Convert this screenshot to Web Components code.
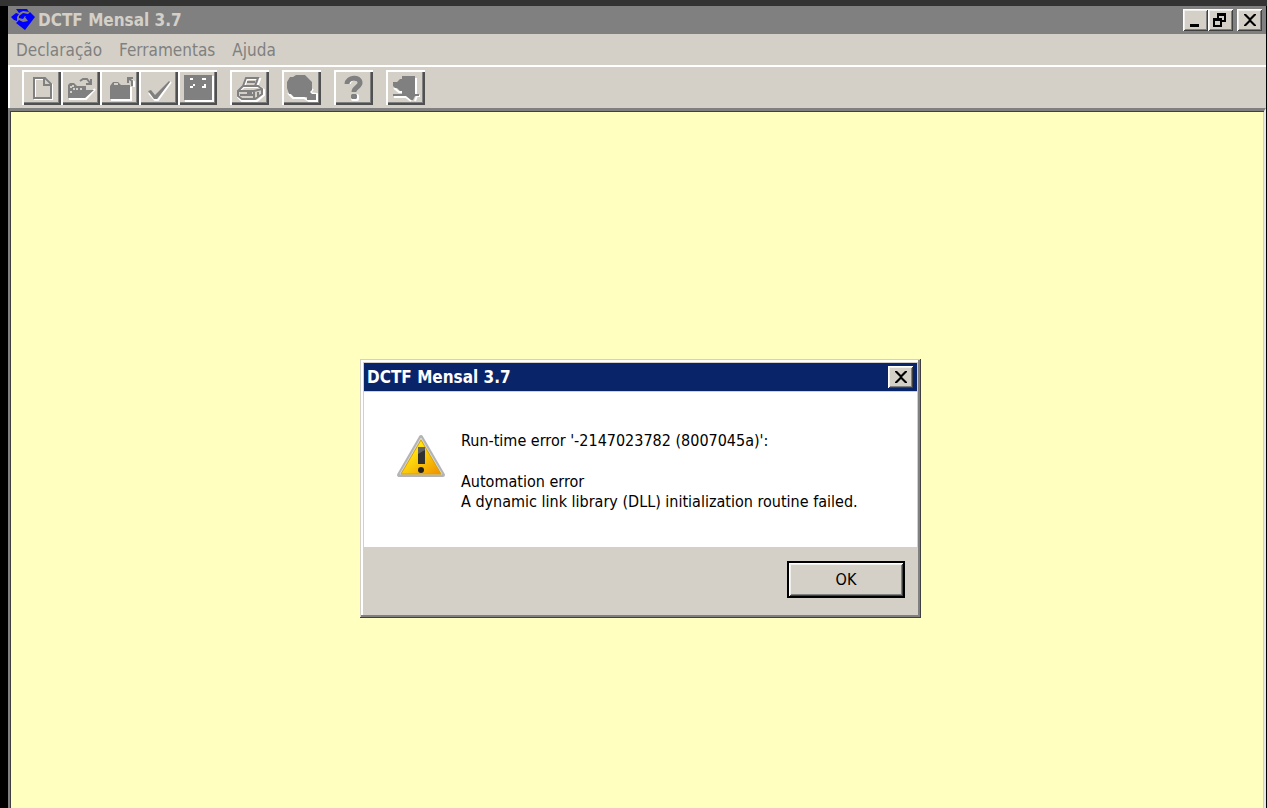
<!DOCTYPE html>
<html lang="pt-BR">
<head>
<meta charset="utf-8">
<title>DCTF Mensal 3.7</title>
<style>
   body {
      margin: 0;
      min-height: 100vh;
      display: flex;
      background: #000;
      font-family: "DejaVu Sans Condensed", "DejaVu Sans", "Noto Sans", sans-serif;
      font-stretch: condensed;
      font-size: 16px;
      line-height: 20px;
      --face: #d4d0c8;
      --shadow: #808080;
      --dark: #404040;
   }
   main {
      flex: 1;
      display: flex;
      flex-direction: column;
      border-top: 6px solid #333;
   }
   app-window { flex: 1; }
</style>
</head>
<body>
<main>
   <app-window>
      <title-bar slot="title" text="DCTF Mensal 3.7" logo controls="minimize restore close"></title-bar>
      <menu-bar slot="menu" items="Declaração,Ferramentas,Ajuda"></menu-bar>
      <tool-bar slot="tools"></tool-bar>
      <error-dialog heading="DCTF Mensal 3.7">
         <p>Run-time error '-2147023782 (8007045a)':</p>
         <p>Automation error<br>A dynamic link library (DLL) initialization routine failed.</p>
      </error-dialog>
   </app-window>
</main>

<script>
const ICONS = {
   novo: '<path d="M12 8h11l6 6v14H12z" fill="none" stroke="#fff" stroke-width="2" transform="translate(1 1)"/><path d="M12 8h11l6 6v14H12zM22 8v7h7" fill="none" stroke="#808080" stroke-width="2"/>',
   abrir: '<path d="M8 29h17l9-10" fill="none" stroke="#fff" stroke-width="2"/><path d="M7 28V15l2-2h4l3 3h9v4h8l-9 8z" fill="#808080"/><path d="M9 16h2v2H9zm3 2h2v2h-2zm-3 3h2v2H9zm6-3h2v2h-2zm4 0h2v2h-2zm-8-3h2v2h-2z" fill="#d4d0c8"/><path d="M19 11l3-2h4l3 4M25 14h5V9" fill="none" stroke="#808080" stroke-width="2"/>',
   fechar: '<path d="M11 30h20V17" fill="none" stroke="#fff" stroke-width="2"/><path d="M10 29V16l3-4h5l3 3h9v14z" fill="#808080"/><path d="M14 14h4" stroke="#d4d0c8" stroke-width="2"/><path d="M34 17v-5l-4-3" fill="none" stroke="#fff" stroke-width="2"/><path d="M32 16v-5l-4-3M28 13V8h5" fill="none" stroke="#808080" stroke-width="2"/>',
   verificar: '<path d="M10 23l6 7h3l13-18" fill="none" stroke="#fff" stroke-width="2"/><path d="M9 21l3-1 4 5 14-14 1 1-13 17h-3z" fill="#808080"/>',
   tabela: '<path d="M7 31h28V6" fill="none" stroke="#fff" stroke-width="2"/><path d="M6 5h28v25H6z" fill="#808080"/><path d="M12 8h3v2h-3zm12 0h4v2h-4zM12 16h3v2h-3zm3-2h2v2h-2zm9 2h4v2h-4zm2-2h2v2h-2z" fill="#fff"/>',
   imprimir: '<path d="M14 17l3-8h13l-3 8M8 22l6-5h16l4 3v5l-7 6H12l-4-4z" fill="none" stroke="#fff" stroke-width="2"/><g fill="none" stroke="#808080" stroke-width="2"><path d="M13 16l3-8h12l-3 8M17 12h8M8 21l5-5h15l4 3v5l-7 5H12l-4-3zM8 21h16l8-2M24 21v8M10 25h13M28 22v5"/></g><path d="M17 22h5v4h-5z" fill="#808080"/>',
   pesquisar: '<path d="M31 19l-3 4 7 1v7h-8l-5-3H11l-5-5" fill="none" stroke="#fff" stroke-width="2"/><path d="M14 5h9l7 7v8l-2 2 2 2h4v6h-9v-3H12l-3-3H7l-2-6v-6l3-5h3z" fill="#808080"/>',
   ajuda: '<path d="M15 14v-2l3-3h5l3 3v3l-5 4v3M19 26h4v3h-4z" fill="none" stroke="#fff" stroke-width="4" stroke-linejoin="round"/><path d="M13 14c0-7 13-8 13-1 0 4-6 4-6 9" fill="none" stroke="#808080" stroke-width="5"/><path d="M18 24h4l1 1v3l-1 1h-4l-1-1v-3z" fill="#808080"/>',
   sair: '<path d="M30 8v16M34 26h-3l-2 5M8 27h12l5 4M8 18l5 4h3" fill="none" stroke="#fff" stroke-width="2"/><path d="M16 6h13v18h4v2h-4l-2 4h-2l-5-4H7v-2h9v-3h-2l-3-3H9l-2-2v-4h4l3-3h2z" fill="#808080"/>'
};

const GLYPHS = {
   minimize: '<path d="M7 15h9v3H7z"/>',
   restore: '<path d="M9 4h9v3H9zM9 4h2v5H9zM16 4h2v9h-2zM13 11h5v2h-5zM5 9h9v3H5zM5 9h2v9H5zM12 9h2v9h-2zM5 16h9v2H5z"/>',
   close: '<path d="M7 5h2l4 4 4-4h2v1l-5 5 5 5v1h-2l-4-4-4 4H7v-1l5-5-5-5z"/>'
};

const LABELS = { minimize: 'Minimizar', restore: 'Restaurar', close: 'Fechar' };

// raised 3D edge used by every push button
const RAISED = `
   button {
      margin: 0;
      padding: 0;
      border: 0;
      font: inherit;
      background: var(--face);
      box-shadow: inset 1px 1px #fff, inset -1px -1px var(--dark), inset 2px 2px #f0eeea, inset -2px -2px var(--shadow);
   }
   svg { display: block; }
`;

class TitleBar extends HTMLElement {
   constructor() {
      super();
      this.attachShadow({ mode: 'open' });
   }

   connectedCallback() {
      const controls = (this.getAttribute('controls') || '').split(' ');
      this.shadowRoot.innerHTML = `
      <style>
      ${RAISED}
      :host {
         display: flex;
         align-items: center;
         height: 28px;
         padding: 0 4px 0 3px;
         background: var(--title-bg, #808080);
         color: var(--title-color, #d4d0c8);
         font-size: 17px;
         font-weight: bold;
      }
      .logo { margin-right: 3px; }
      span { flex: 1; }
      button { width: 25px; height: 22px; }
      .close { margin-left: 4px; }
      </style>
      ${this.hasAttribute('logo') ? `
      <svg class="logo" width="24" height="24" viewBox="0 0 24 24" fill="#00f">
         <path d="M5 1h11l2 3-6-1-4 2zM0 9l5-4 3 1-2 3v4l-3-1zM19 4l5 5-10 13-9-7 3-3 4 2 5-1-3-4z"/>
         <path d="M8 8l4-3 5 1 1 3-4-1-2 3-4-1z"/>
      </svg>` : ''}
      <span>${this.getAttribute('text')}</span>
      ${controls.map(c => `<button class="${c}" aria-label="${LABELS[c]}"><svg width="25" height="22">${GLYPHS[c]}</svg></button>`).join('')}
      `;
   }
}

class MenuBar extends HTMLElement {
   constructor() {
      super();
      this.attachShadow({ mode: 'open' });
   }

   connectedCallback() {
      this.shadowRoot.innerHTML = `
      <style>
      :host {
         display: flex;
         align-items: center;
         gap: 17px;
         height: 31px;
         padding-left: 8px;
         font-size: 17px;
      }
      button {
         padding: 0;
         border: 0;
         background: none;
         font: inherit;
         color: #808080;
      }
      </style>
      ${this.getAttribute('items').split(',').map(i => `<button>${i}</button>`).join('')}
      `;
   }
}

class ToolBar extends HTMLElement {
   constructor() {
      super();
      this.attachShadow({ mode: 'open' });
      const groups = [['novo', 'abrir', 'fechar', 'verificar', 'tabela'], ['imprimir'], ['pesquisar'], ['ajuda'], ['sair']];
      this.shadowRoot.innerHTML = `
      <style>
      ${RAISED}
      :host {
         display: flex;
         gap: 13px;
         padding: 3px 12px;
         border: solid #fff;
         border-width: 2px 0 0 2px;
      }
      div { display: flex; }
      button {
         width: 39px;
         height: 35px;
         box-shadow: inset 2px 2px #fff, inset -2px -2px #505050, inset -3px -3px var(--shadow);
      }
      </style>
      ${groups.map(g => `<div>${g.map(n => `<button aria-label="${n}"><svg width="39" height="35">${ICONS[n]}</svg></button>`).join('')}</div>`).join('')}
      `;
   }
}

class ErrorDialog extends HTMLElement {
   constructor() {
      super();
      this.attachShadow({ mode: 'open' });
   }

   connectedCallback() {
      this.shadowRoot.innerHTML = `
      <style>
      ${RAISED}
      :host {
         display: block;
         padding: 4px;
         background: var(--face);
         color: #000;
         box-shadow: inset -1px -1px var(--dark), inset 1px 1px var(--face), inset -3px -3px var(--shadow), inset 3px 3px #fff;
         --title-bg: #0a246a;
         --title-color: #fff;
      }
      .body {
         display: flex;
         gap: 15px;
         margin-top: 1px;
         padding: 39px 32px 35px;
         background: #fff;
      }
      .body svg { flex: none; margin-top: 3px; }
      ::slotted(p) { margin: 0 0 21px; }
      ::slotted(p:last-child) { margin: 0; }
      .actions {
         display: flex;
         justify-content: flex-end;
         padding: 14px 12px 16px;
      }
      .actions button {
         width: 118px;
         height: 37px;
         border: 2px solid #000;
      }
      </style>
      <title-bar text="${this.getAttribute('heading')}" controls="close"></title-bar>
      <div class="body">
         <svg width="50" height="46" viewBox="0 0 50 46">
            <defs>
               <linearGradient id="y" x1="0" y1="0" x2="1" y2="1">
                  <stop offset=".3" stop-color="#ffe610"/>
                  <stop offset="1" stop-color="#f09000"/>
               </linearGradient>
            </defs>
            <path d="M25 3L3 41h44z" fill="#b4b4b4" stroke="#b4b4b4" stroke-width="4" stroke-linejoin="round"/>
            <path d="M25 4L4 40h42z" fill="#d8d8d8" stroke="#d8d8d8" stroke-linejoin="round"/>
            <path d="M25 6L5 40h40z" fill="url(#y)" stroke="#d9a300"/>
            <path d="M22 13h7v17h-7z" fill="#303030"/>
            <path d="M22 20l7-4v-3h-7z" fill="#606060"/>
            <circle cx="25" cy="36" r="3" fill="#222"/>
         </svg>
         <div><slot></slot></div>
      </div>
      <div class="actions"><button>OK</button></div>
      `;
   }
}

class AppWindow extends HTMLElement {
   constructor() {
      super();
      this.attachShadow({ mode: 'open' });
      this.shadowRoot.innerHTML = `
      <style>
      :host {
         display: flex;
         flex-direction: column;
         margin: 0 1px 0 8px;
         background: var(--face);
      }
      .client {
         flex: 1;
         position: relative;
         border: solid var(--shadow);
         border-width: 3px 2px 0 2px;
         border-right-color: #e8e6e2;
         background: #ffffc0;
         box-shadow: inset 1px 1px var(--dark), inset -1px 0 var(--face);
      }
      /* modal floats over the client area */
      ::slotted(error-dialog) {
         position: absolute;
         left: 350px;
         top: 248px;
         width: 553px;
      }
      </style>
      <slot name="title"></slot>
      <slot name="menu"></slot>
      <slot name="tools"></slot>
      <div class="client"><slot></slot></div>
      `;
   }
}

customElements.define('title-bar', TitleBar);
customElements.define('menu-bar', MenuBar);
customElements.define('tool-bar', ToolBar);
customElements.define('error-dialog', ErrorDialog);
customElements.define('app-window', AppWindow);
</script>
</body>
</html>
